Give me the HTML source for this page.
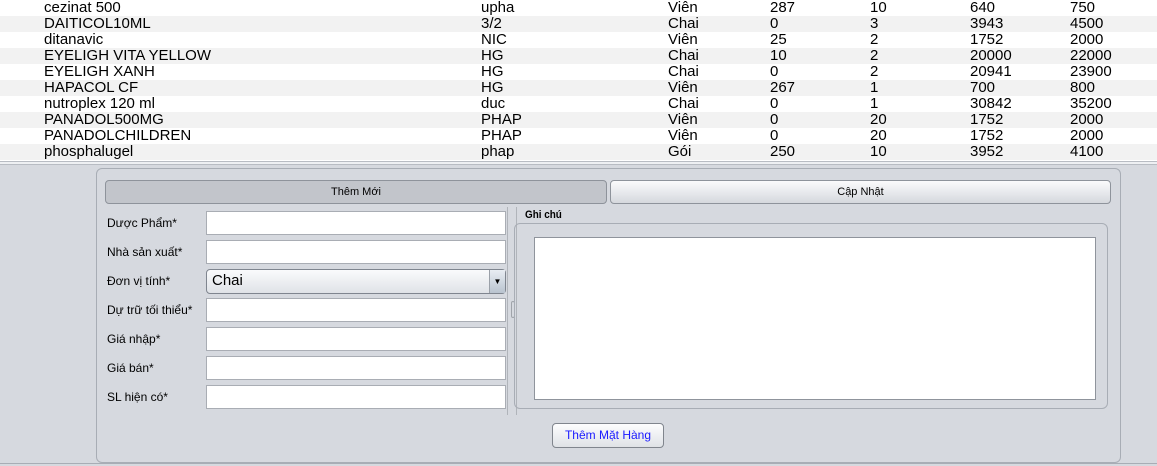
<!DOCTYPE html>
<html><head><meta charset="utf-8"><style>
*{box-sizing:border-box;margin:0;padding:0}
body{width:1157px;height:466px;overflow:hidden;background:#d6d9df;font-family:"Liberation Sans",sans-serif;position:relative}
.tbl{position:absolute;left:0;top:0;width:1157px;height:161px;background:#fff}
.r{position:absolute;left:0;width:1157px;height:16px;font-size:15px;line-height:16px;color:#000}
.r.g{background:#f2f2f2}
.r span{position:absolute;top:0}
.sep{position:absolute;left:0;top:161px;width:1157px;height:4px;background:#eef0f3;border-top:1px solid #b8bcc3;border-bottom:1px solid #b8bcc3}
.a{position:absolute}
.panel{left:96px;top:168px;width:1025px;height:295px;border:1px solid #a8adb5;border-radius:6px;background:#d6d9df}
.tab{top:180px;height:24px;border:1px solid #8e939b;border-radius:4px;font-size:11px;text-align:center;line-height:22px}
.lbl{left:107px;font-size:12px;color:#000}
.inp{left:206px;width:300px;height:24px;background:#fff;border:1px solid #a9adb4}
</style></head><body>
<div class="tbl">
<div class="r" style="top:0"><span style="left:44px">cezinat 500</span><span style="left:481px">upha</span><span style="left:668px">Viên</span><span style="left:770px">287</span><span style="left:870px">10</span><span style="left:970px">640</span><span style="left:1070px">750</span></div>
<div class="r g" style="top:16px"><span style="left:44px">DAITICOL10ML</span><span style="left:481px">3/2</span><span style="left:668px">Chai</span><span style="left:770px">0</span><span style="left:870px">3</span><span style="left:970px">3943</span><span style="left:1070px">4500</span></div>
<div class="r" style="top:32px"><span style="left:44px">ditanavic</span><span style="left:481px">NIC</span><span style="left:668px">Viên</span><span style="left:770px">25</span><span style="left:870px">2</span><span style="left:970px">1752</span><span style="left:1070px">2000</span></div>
<div class="r g" style="top:48px"><span style="left:44px">EYELIGH VITA YELLOW</span><span style="left:481px">HG</span><span style="left:668px">Chai</span><span style="left:770px">10</span><span style="left:870px">2</span><span style="left:970px">20000</span><span style="left:1070px">22000</span></div>
<div class="r" style="top:64px"><span style="left:44px">EYELIGH XANH</span><span style="left:481px">HG</span><span style="left:668px">Chai</span><span style="left:770px">0</span><span style="left:870px">2</span><span style="left:970px">20941</span><span style="left:1070px">23900</span></div>
<div class="r g" style="top:80px"><span style="left:44px">HAPACOL CF</span><span style="left:481px">HG</span><span style="left:668px">Viên</span><span style="left:770px">267</span><span style="left:870px">1</span><span style="left:970px">700</span><span style="left:1070px">800</span></div>
<div class="r" style="top:96px"><span style="left:44px">nutroplex 120 ml</span><span style="left:481px">duc</span><span style="left:668px">Chai</span><span style="left:770px">0</span><span style="left:870px">1</span><span style="left:970px">30842</span><span style="left:1070px">35200</span></div>
<div class="r g" style="top:112px"><span style="left:44px">PANADOL500MG</span><span style="left:481px">PHAP</span><span style="left:668px">Viên</span><span style="left:770px">0</span><span style="left:870px">20</span><span style="left:970px">1752</span><span style="left:1070px">2000</span></div>
<div class="r" style="top:128px"><span style="left:44px">PANADOLCHILDREN</span><span style="left:481px">PHAP</span><span style="left:668px">Viên</span><span style="left:770px">0</span><span style="left:870px">20</span><span style="left:970px">1752</span><span style="left:1070px">2000</span></div>
<div class="r g" style="top:144px"><span style="left:44px">phosphalugel</span><span style="left:481px">phap</span><span style="left:668px">Gói</span><span style="left:770px">250</span><span style="left:870px">10</span><span style="left:970px">3952</span><span style="left:1070px">4100</span></div>
</div>
<div class="sep"></div>
<div class="a panel"></div>
<div class="a tab" style="left:105px;width:502px;background:#c2c5cb">Thêm Mới</div>
<div class="a tab" style="left:610px;width:501px;background:linear-gradient(#fbfbfc,#e4e6ea 60%,#d5d8dd)">Cập Nhật</div>
<div class="a lbl" style="top:216px">Dược Phẩm*</div>
<div class="a lbl" style="top:245px">Nhà sản xuất*</div>
<div class="a lbl" style="top:274px">Đơn vị tính*</div>
<div class="a lbl" style="top:303px">Dự trữ tối thiểu*</div>
<div class="a lbl" style="top:332px">Giá nhập*</div>
<div class="a lbl" style="top:361px">Giá bán*</div>
<div class="a lbl" style="top:390px">SL hiện có*</div>
<div class="a inp" style="top:211px"></div>
<div class="a inp" style="top:240px"></div>
<div class="a" style="left:206px;top:269px;width:300px;height:25px;border:1px solid #7f858f;border-radius:4px;background:linear-gradient(#fafbfc,#dfe2e7);font-size:15px;line-height:22px;padding-left:5px">Chai<div style="position:absolute;right:0;top:0;width:16px;height:23px;border-left:1px solid #9aa0a8;background:linear-gradient(#e8edf3,#b9c3cf);font-size:8px;text-align:center;line-height:23px">▼</div></div>
<div class="a inp" style="top:298px"></div>
<div class="a inp" style="top:327px"></div>
<div class="a inp" style="top:356px"></div>
<div class="a inp" style="top:385px"></div>
<div class="a" style="left:507px;top:207px;width:1px;height:208px;background:#b0b4ba"></div>
<div class="a" style="left:516px;top:207px;width:1px;height:208px;background:#b0b4ba"></div>
<div class="a" style="left:511px;top:301px;width:4px;height:17px;border:1px solid #a0a4aa;border-radius:2px"></div>
<div class="a" style="left:525px;top:209px;font-size:11px;font-weight:bold;transform:scaleX(0.9);transform-origin:left">Ghi chú</div>
<div class="a" style="left:514px;top:223px;width:594px;height:186px;border:1px solid #a8adb5;border-radius:6px"></div>
<div class="a" style="left:534px;top:237px;width:562px;height:163px;background:#fff;border:1px solid #8f949c"></div>
<div class="a" style="left:552px;top:423px;width:112px;height:25px;border:1px solid #80858d;border-radius:4px;background:linear-gradient(#fdfdfe,#dfe2e6);color:#1a1aff;font-size:12px;text-align:center;line-height:23px">Thêm Mặt Hàng</div>
<div class="a" style="left:0;top:463px;width:1157px;height:1px;background:#a8adb5"></div>
</body></html>
